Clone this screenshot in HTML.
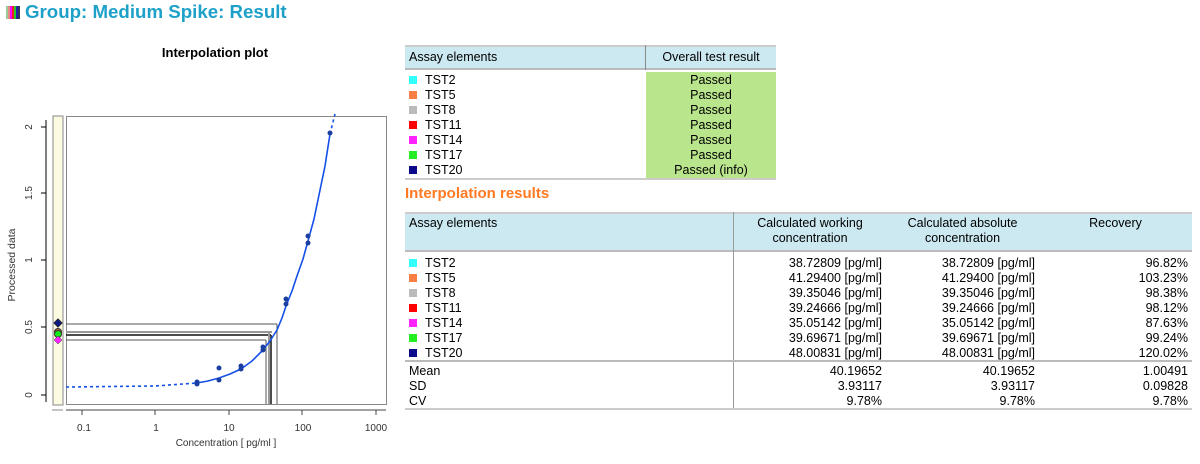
<!DOCTYPE html>
<html><head><meta charset="utf-8"><style>
*{margin:0;padding:0;box-sizing:border-box}
body{width:1200px;height:464px;background:#fff;font-family:"Liberation Sans",Arial,sans-serif;position:relative;overflow:hidden;color:#000}
.a{position:absolute;white-space:nowrap}
.t{font-size:12.5px;line-height:15px}
.sq{display:inline-block;width:8px;height:8px;margin-right:8px;vertical-align:0px}
.r{text-align:right}
</style></head><body>
<div class="a" style="left:6px;top:6px;width:14px;height:13px;background:linear-gradient(90deg,#9c9 0 2px,#e88 2px 4px,#f0f 4px 6px,#e22 6px 8px,#2c2 8px 10px,#22a 10px 12px,#335 12px 14px)"></div>
<div class="a" style="left:25px;top:1px;font-size:18.7px;font-weight:bold;color:#1ea1c9">Group: Medium Spike: Result</div>

<svg class="a" style="left:0;top:0" width="400" height="464" font-family="Liberation Sans, Arial, sans-serif">
<text x="215" y="57" font-size="13" font-weight="bold" text-anchor="middle">Interpolation plot</text>
<rect x="53" y="116" width="10" height="289" fill="#fcfae0" stroke="#888"/>
<rect x="66.5" y="116.5" width="320" height="288" fill="none" stroke="#888"/>
<line x1="46" y1="120" x2="46" y2="402" stroke="#000"/>
<g stroke="#000"><line x1="41" y1="395" x2="46" y2="395"/><line x1="41" y1="327" x2="46" y2="327"/><line x1="41" y1="260" x2="46" y2="260"/><line x1="41" y1="193" x2="46" y2="193"/><line x1="41" y1="127" x2="46" y2="127"/></g>
<g font-size="10" fill="#333" text-anchor="middle">
<text transform="translate(32,395) rotate(-90)">0</text>
<text transform="translate(32,327) rotate(-90)">0.5</text>
<text transform="translate(32,260) rotate(-90)">1</text>
<text transform="translate(32,193) rotate(-90)">1.5</text>
<text transform="translate(32,127) rotate(-90)">2</text>
<text transform="translate(15,265) rotate(-90)" font-size="10.5">Processed data</text>
<text x="84" y="431">0.1</text><text x="156" y="431">1</text><text x="229" y="431">10</text><text x="303" y="431">100</text><text x="376" y="431">1000</text>
<text x="226" y="446" font-size="10">Concentration  [ pg/ml ]</text>
</g>
<line x1="66" y1="410" x2="386" y2="410" stroke="#444"/>
<line x1="52" y1="410" x2="63" y2="410" stroke="#888"/>
<g stroke="#444"><line x1="82" y1="410" x2="82" y2="415"/><line x1="155" y1="410" x2="155" y2="415"/><line x1="229" y1="410" x2="229" y2="415"/><line x1="302" y1="410" x2="302" y2="415"/><line x1="376" y1="410" x2="376" y2="415"/></g>
<g stroke="#555" fill="none">
<line x1="66" y1="324" x2="277" y2="324"/>
<line x1="66" y1="332" x2="272" y2="332" stroke="#999" stroke-width="2"/>
<line x1="66" y1="335" x2="271" y2="335" stroke="#111" stroke-width="1.5"/>
<line x1="66" y1="340" x2="266" y2="340"/>
<line x1="266" y1="340" x2="266" y2="404"/>
<line x1="269" y1="332" x2="269" y2="404" stroke="#999" stroke-width="2"/>
<line x1="271" y1="335" x2="271" y2="404" stroke="#111" stroke-width="1.5"/>
<line x1="277" y1="324" x2="277" y2="404"/>
</g>
<path d="M66 387 L155 386 L197 383" stroke="#1450e8" stroke-width="1.6" fill="none" stroke-dasharray="3 3"/>
<polyline points="197,383 208,381 219,378 230,374 241,369 252,361 263,350 270,341 277,330 282,318 286,306 292,291 297,276 303,259 308,241 314,219 319,195 325,166 330,134" stroke="#1450e8" stroke-width="1.6" fill="none" stroke-linejoin="round"/>
<path d="M330 134 L335 114" stroke="#1450e8" stroke-width="1.6" fill="none" stroke-dasharray="3 3"/>
<g fill="#1a3fa0">
<circle cx="197" cy="382" r="2.5"/><circle cx="197" cy="384" r="2.5"/>
<circle cx="219" cy="380" r="2.5"/><circle cx="219" cy="368" r="2.5"/>
<circle cx="241" cy="366" r="2.5"/><circle cx="241" cy="369" r="2.5"/>
<circle cx="263" cy="347" r="2.5"/><circle cx="263" cy="350" r="2.5"/>
<circle cx="286" cy="299" r="2.5"/><circle cx="286" cy="304" r="2.5"/>
<circle cx="308" cy="236" r="2.5"/><circle cx="308" cy="243" r="2.5"/>
<circle cx="330" cy="133" r="2.5"/>
</g>
<path d="M58 319 L62 323 L58 327 L54 323Z" fill="#0a1a8a" stroke="#223"/>
<circle cx="58" cy="332" r="3.5" fill="#c86a30" stroke="#333"/>
<circle cx="58" cy="334" r="3.5" fill="#1e1" stroke="#333"/>
<path d="M58 336 L62 340 L58 344 L54 340Z" fill="#f2f" stroke="#444" stroke-width=".5"/>
</svg>

<!-- Table 1 -->
<div class="a" style="left:405px;top:45px;width:371px;height:25px;background:#cce9f1;border-top:2px solid #ccc;border-bottom:2px solid #bbb"></div>
<div class="a" style="left:645px;top:45px;width:1px;height:25px;background:#888"></div>
<div class="a t" style="left:409px;top:50px">Assay elements</div>
<div class="a t" style="left:646px;top:50px;width:130px;text-align:center">Overall test result</div>
<div class="a" style="left:646px;top:72px;width:130px;height:106px;background:#b9e58c"></div>
<div class="a" style="left:405px;top:178px;width:371px;height:2px;background:#ccc"></div>
<div class="a t" style="left:409px;top:73px">
<div><span class="sq" style="background:#3ff"></span>TST2</div>
<div><span class="sq" style="background:#f77f44"></span>TST5</div>
<div><span class="sq" style="background:#bbb"></span>TST8</div>
<div><span class="sq" style="background:#f00"></span>TST11</div>
<div><span class="sq" style="background:#f2f"></span>TST14</div>
<div><span class="sq" style="background:#2e2"></span>TST17</div>
<div><span class="sq" style="background:#0a0a8a"></span>TST20</div>
</div>
<div class="a t" style="left:646px;top:73px;width:130px;text-align:center">
<div>Passed</div><div>Passed</div><div>Passed</div><div>Passed</div><div>Passed</div><div>Passed</div><div>Passed (info)</div></div>

<div class="a" style="left:405px;top:185px;font-size:15px;font-weight:bold;color:#ff7a22">Interpolation results</div>

<!-- Table 2 -->
<div class="a" style="left:405px;top:212px;width:787px;height:40px;background:#cce9f1;border-top:2px solid #ccc;border-bottom:2px solid #bbb"></div>
<div class="a" style="left:733px;top:212px;width:1px;height:197px;background:#999"></div>
<div class="a t" style="left:409px;top:216px">Assay elements</div>
<div class="a t" style="left:734px;top:216px;width:152px;text-align:center">Calculated working<br>concentration</div>
<div class="a t" style="left:886px;top:216px;width:153px;text-align:center">Calculated absolute<br>concentration</div>
<div class="a t" style="left:1039px;top:216px;width:153px;text-align:center">Recovery</div>
<div class="a t" style="left:409px;top:256px">
<div><span class="sq" style="background:#3ff"></span>TST2</div>
<div><span class="sq" style="background:#f77f44"></span>TST5</div>
<div><span class="sq" style="background:#bbb"></span>TST8</div>
<div><span class="sq" style="background:#f00"></span>TST11</div>
<div><span class="sq" style="background:#f2f"></span>TST14</div>
<div><span class="sq" style="background:#2e2"></span>TST17</div>
<div><span class="sq" style="background:#0a0a8a"></span>TST20</div>
</div>
<div class="a t r" style="left:734px;top:256px;width:148px">38.72809 [pg/ml]<br>41.29400 [pg/ml]<br>39.35046 [pg/ml]<br>39.24666 [pg/ml]<br>35.05142 [pg/ml]<br>39.69671 [pg/ml]<br>48.00831 [pg/ml]</div>
<div class="a t r" style="left:886px;top:256px;width:149px">38.72809 [pg/ml]<br>41.29400 [pg/ml]<br>39.35046 [pg/ml]<br>39.24666 [pg/ml]<br>35.05142 [pg/ml]<br>39.69671 [pg/ml]<br>48.00831 [pg/ml]</div>
<div class="a t r" style="left:1039px;top:256px;width:149px">96.82%<br>103.23%<br>98.38%<br>98.12%<br>87.63%<br>99.24%<br>120.02%</div>
<div class="a" style="left:405px;top:360px;width:787px;height:2px;background:#bbb"></div>
<div class="a t" style="left:409px;top:364px">Mean<br>SD<br>CV</div>
<div class="a t r" style="left:734px;top:364px;width:148px">40.19652<br>3.93117<br>9.78%</div>
<div class="a t r" style="left:886px;top:364px;width:149px">40.19652<br>3.93117<br>9.78%</div>
<div class="a t r" style="left:1039px;top:364px;width:149px">1.00491<br>0.09828<br>9.78%</div>
<div class="a" style="left:405px;top:408px;width:787px;height:2px;background:#ccc"></div>
</body></html>
